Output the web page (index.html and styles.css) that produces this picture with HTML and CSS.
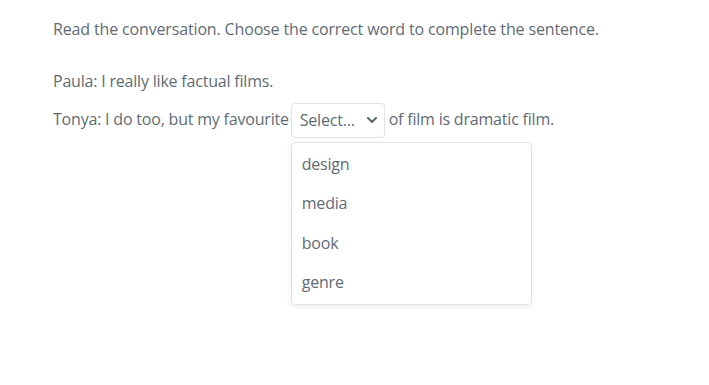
FILE: index.html
```html
<!DOCTYPE html>
<html lang="en">
<head>
  <meta charset="UTF-8" />
  <title>Choose the correct word</title>
  <link rel="stylesheet" href="styles.css">
</head>
<body>
  <div class="task">
    <p class="intro">Read the conversation. Choose the correct word to complete the sentence.</p>
    <div class="line">Paula: I really like factual films.</div>
    <div class="line">Tonya: I do too, but my favourite
      <div class="picker">
        <div class="select">Select...
          <svg class="chev" width="12" height="12" viewBox="0 0 12 12"><path d="M2 4 L6 8 L10 4" fill="none" stroke="#5f6c74" stroke-width="2.2" stroke-linecap="round" stroke-linejoin="round"/></svg>
        </div>
        <ul class="menu">
          <li>design</li>
          <li>media</li>
          <li>book</li>
          <li>genre</li>
        </ul>
      </div>
      of film is dramatic film.</div>
  </div>
</body>
</html>
```

FILE: styles.css
```css
* {
  box-sizing: border-box;
}
html, body {
  min-height: 100%;
}
body {
  margin: 0;
  min-height: 100vh;
  background: #fff;
  color: #5f6c74;
  font-family: 'Open Sans', sans-serif;
  font-size: 16px;
  letter-spacing: -0.15px;
}
.task {
  min-height: 100vh;
  padding: 17px 53px;
}
.intro {
  margin: 0 0 28px;
  line-height: 24px;
}
.line {
  margin: 0 0 14px;
  line-height: 24px;
  letter-spacing: -0.2px;
}
.picker {
  position: relative;
  display: inline-block;
  vertical-align: middle;
  margin: -5px 0 -4px -2px;
}
.select {
  display: flex;
  align-items: center;
  gap: 11px;
  height: 35px;
  padding: 0 6px 0 8px;
  border: 1px solid #e1e4e6;
  border-radius: 4px;
}
.chev {
  display: block;
}
.menu {
  position: absolute;
  top: 39px;
  left: 0;
  width: 241px;
  margin: 0;
  padding: 2px 0 1px;
  list-style: none;
  background: #fff;
  border: 1px solid #e1e4e6;
  border-radius: 4px;
  box-shadow: 0 2px 6px rgba(0, 0, 0, 0.08);
}
.menu li {
  padding: 0 10px;
  line-height: 39.5px;
}
```
